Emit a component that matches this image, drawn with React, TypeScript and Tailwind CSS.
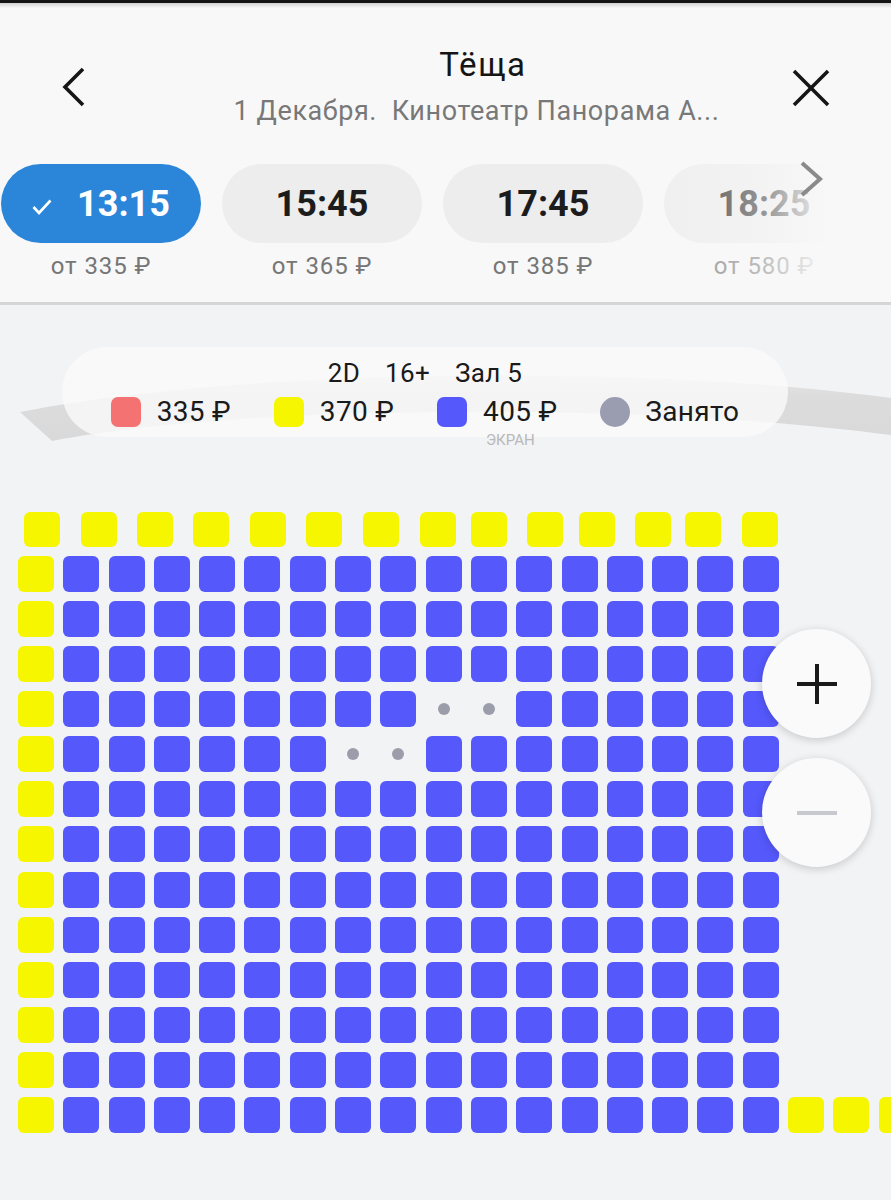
import React from "react";

const TOP_ROW_ML = [
  "ml-[24px]",
  "ml-[21px]",
  "ml-[20px]",
  "ml-[20px]",
  "ml-[21px]",
  "ml-[20px]",
  "ml-[21px]",
  "ml-[21px]",
  "ml-[15px]",
  "ml-[20px]",
  "ml-[16px]",
  "ml-[20px]",
  "ml-[14px]",
  "ml-[21px]",
];

type Cell = "y" | "b" | "d" | "_";

function buildRows(): Cell[][] {
  const rows: Cell[][] = [];
  for (let r = 0; r < 13; r++) {
    const row: Cell[] = [];
    for (let c = 0; c < 20; c++) {
      if (c === 0) row.push("y");
      else if (c <= 16) {
        if ((r === 3 && (c === 9 || c === 10)) || (r === 4 && (c === 7 || c === 8))) row.push("d");
        else row.push("b");
      } else row.push(r === 12 ? "y" : "_");
    }
    rows.push(row);
  }
  return rows;
}

const ROWS = buildRows();

function Seat({ t }: { t: Cell }) {
  if (t === "y") return <div className="w-[36px] h-[36px] rounded-[6px] bg-[#f6f600]" />;
  if (t === "b") return <div className="w-[36px] h-[36px] rounded-[6px] bg-[#5558fb]" />;
  if (t === "d")
    return (
      <div className="w-[36px] h-[36px] flex items-center justify-center">
        <div className="w-[12px] h-[12px] rounded-full bg-[#9c9dab]" />
      </div>
    );
  return <div className="w-[36px] h-[36px]" />;
}

function Chip({
  time,
  price,
  active,
}: {
  time: string;
  price: string;
  active?: boolean;
}) {
  return (
    <div className="w-[200px] shrink-0 flex flex-col items-center">
      <div
        className={
          active
            ? "w-[200px] h-[79px] rounded-full bg-[#2b86d9] flex items-center justify-center text-white"
            : "w-[200px] h-[79px] rounded-full bg-[#ededee] flex items-center justify-center text-[#1c1c1c]"
        }
      >
        {active && (
          <svg width="20" height="16" viewBox="0 0 20 16" className="mr-[25px] mt-[6px]">
            <polyline points="1.5,8 7,14 18.5,1.5" fill="none" stroke="white" strokeWidth="2.6" />
          </svg>
        )}
        <span className="text-[36px] leading-[40px] font-bold">{time}</span>
      </div>
      <div className="mt-[10px] text-[24px] leading-[26px] tracking-[0.9px] text-[#767676]">{price}</div>
    </div>
  );
}

export default function App() {
  return (
    <div className="w-[891px] h-[1200px] overflow-hidden bg-[#f2f3f5] font-['Roboto','Noto_Sans',sans-serif] relative">
      {/* header */}
      <div className="bg-[#f8f8f8] border-b-[3px] border-[#d6d6d6]">
        <div className="h-[3px] bg-[#141414]" />
        <div className="h-[5px] bg-gradient-to-b from-[#d0d0d0] to-[#f8f8f8]" />
        <div className="flex items-start pt-[38px]">
          <div className="w-[146px] pl-[58px] pt-[19px]">
            <svg width="30" height="44" viewBox="0 0 30 44">
              <polyline points="25,4 7,22 25,40" fill="none" stroke="#151515" strokeWidth="3.6" />
            </svg>
          </div>
          <div className="flex-1 pl-[20px] flex flex-col items-center">
            <div className="ml-[9px] text-[33px] leading-[38px] tracking-[1.6px] text-[#151515]">Тёща</div>
            <div className="mt-[12px] mr-[4px] text-[27px] leading-[30px] tracking-[0.6px] text-[#787878] whitespace-pre">
              1 Декабря.  Кинотеатр Панорама А...
            </div>
          </div>
          <div className="w-[100px] pt-[22px]">
            <svg width="40" height="40" viewBox="0 0 40 40">
              <line x1="3" y1="3" x2="37" y2="37" stroke="#151515" strokeWidth="3.6" />
              <line x1="37" y1="3" x2="3" y2="37" stroke="#151515" strokeWidth="3.6" />
            </svg>
          </div>
        </div>
        <div className="relative mt-[38px] pb-[23px]">
          <div className="flex gap-[21px] pl-[1px] overflow-hidden">
            <Chip time="13:15" price="от 335 ₽" active />
            <Chip time="15:45" price="от 365 ₽" />
            <Chip time="17:45" price="от 385 ₽" />
            <Chip time="18:25" price="от 580 ₽" />
          </div>
          <div className="absolute top-0 bottom-0 left-[660px] right-0 bg-gradient-to-r from-[#f8f8f8]/20 via-[#f8f8f8]/55 via-[45%] to-[#f8f8f8] to-[74%]" />
          <svg
            width="30"
            height="40"
            viewBox="0 0 30 40"
            className="absolute left-[797px] top-[-4px]"
          >
            <polyline points="5,3 23,19 5,35" fill="none" stroke="#8a8a8a" strokeWidth="4" />
          </svg>
        </div>
      </div>

      {/* seat area */}
      <div className="relative pt-[42px]">
        {/* screen arc */}
        <svg
          width="891"
          height="120"
          viewBox="0 340 891 120"
          className="absolute left-0 top-[34px]"
        >
          <defs>
            <linearGradient id="arcg" x1="0" y1="0" x2="0" y2="1">
              <stop offset="0" stopColor="#e6e6e6" />
              <stop offset="0.3" stopColor="#dcdcdc" />
              <stop offset="1" stopColor="#d9d9d9" />
            </linearGradient>
          </defs>
          <path
            d="M20,413 C250,368 650,366 891,399 L891,436 C650,404 250,404 52,442 Z"
            fill="url(#arcg)"
          />
        </svg>

        <div className="relative ml-[62px] w-[726px] h-[90px] rounded-full bg-[#fafafa]/80 flex flex-col items-center">
          <div className="mt-[10px] flex gap-[25px] text-[26px] leading-[32px] tracking-[0.3px] text-[#1a1a1a]">
            <span>2D</span>
            <span>16+</span>
            <span>Зал 5</span>
          </div>
          <div className="mt-[7px] flex items-center gap-[43px] text-[28px] leading-[32px] tracking-[0.3px] text-[#1a1a1a]">
            <div className="flex items-center gap-[16px]">
              <div className="w-[30px] h-[30px] rounded-[7px] bg-[#f47272]" />
              <span>335 ₽</span>
            </div>
            <div className="flex items-center gap-[16px]">
              <div className="w-[30px] h-[30px] rounded-[7px] bg-[#f6f600]" />
              <span>370 ₽</span>
            </div>
            <div className="flex items-center gap-[16px]">
              <div className="w-[30px] h-[30px] rounded-[7px] bg-[#5558fb]" />
              <span>405 ₽</span>
            </div>
            <div className="flex items-center gap-[15px]">
              <div className="w-[30px] h-[30px] rounded-full bg-[#9a9db0]" />
              <span>Занято</span>
            </div>
          </div>
        </div>
        <div className="absolute left-[486px] top-[127px] text-[15px] leading-[16px] text-[#b8b8b8]">
          ЭКРАН
        </div>

        {/* seats */}
        <div className="mt-[75px] flex">
          {TOP_ROW_ML.map((ml, i) => (
            <div key={i} className={`${ml} shrink-0 w-[36px] h-[35px] rounded-[6px] bg-[#f6f600]`} />
          ))}
        </div>
        <div className="mt-[9px] pl-[18px] grid grid-cols-[repeat(20,36px)] gap-x-[9.3px] gap-y-[9.08px]">
          {ROWS.map((row, r) => row.map((t, c) => <Seat key={`${r}-${c}`} t={t} />))}
        </div>

        {/* zoom buttons */}
        <div className="absolute left-[762px] top-[324px] w-[109px] h-[109px] rounded-full bg-[#fafafa] shadow-[0_2px_8px_rgba(0,0,0,0.18)] flex items-center justify-center">
          <svg width="42" height="42" viewBox="0 0 42 42">
            <line x1="1" y1="21" x2="41" y2="21" stroke="#1a1a1a" strokeWidth="4" />
            <line x1="21" y1="1" x2="21" y2="41" stroke="#1a1a1a" strokeWidth="4" />
          </svg>
        </div>
        <div className="absolute left-[762px] top-[453px] w-[109px] h-[109px] rounded-full bg-[#fafafa] shadow-[0_2px_8px_rgba(0,0,0,0.18)] flex items-center justify-center">
          <svg width="42" height="42" viewBox="0 0 42 42">
            <line x1="1" y1="21" x2="41" y2="21" stroke="#c8c8d0" strokeWidth="4" />
          </svg>
        </div>
      </div>
    </div>
  );
}
